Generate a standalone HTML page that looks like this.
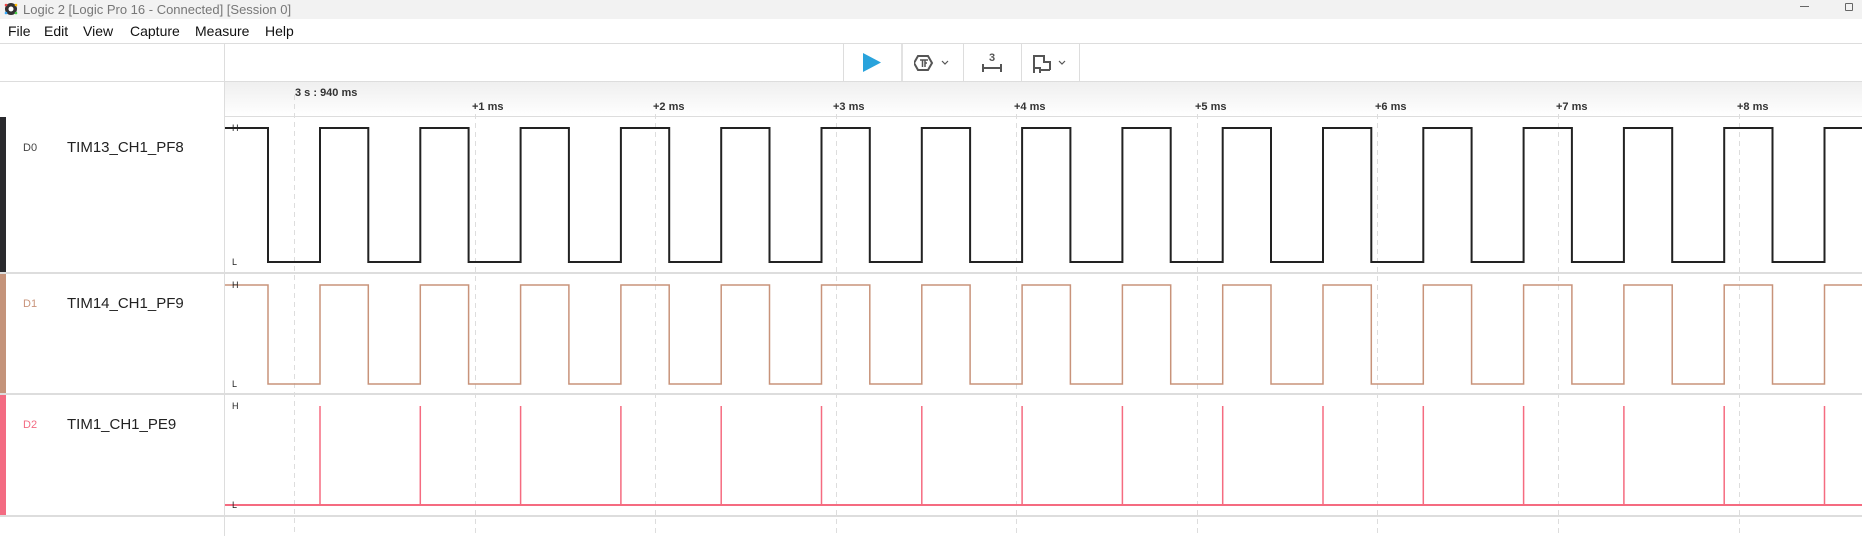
<!DOCTYPE html>
<html><head><meta charset="utf-8"><style>
*{margin:0;padding:0;box-sizing:border-box}
body{width:1862px;height:536px;overflow:hidden;background:#fff;font-family:"Liberation Sans",sans-serif;position:relative}
.abs{position:absolute}
.title{left:0;top:0;width:1862px;height:19px;background:#f2f2f2}
.title span{position:absolute;left:23px;top:2px;font-size:13px;color:#777}
.menu{top:19px;left:0;width:1862px;height:25px;border-bottom:1px solid #ddd}
.menu span{position:absolute;top:4px;font-size:14px;color:#111}
.tb{top:44px;left:0;width:1862px;height:38px;border-bottom:1px solid #ddd}
.ruler{top:82px;left:225px;width:1637px;height:35px;background:linear-gradient(#efefef,#fff);border-bottom:1px solid #ddd}
.rl{position:absolute;font-size:11px;font-weight:bold;color:#333}
.vl{position:absolute;width:1px;background:#ddd}
.lbl{position:absolute;font-size:11px}
.nm{position:absolute;font-size:15px;color:#222}
.hl{position:absolute;font-size:9px;color:#222}
</style></head><body>
<div class="abs title"><svg class="abs" style="left:4px;top:2px" width="14" height="14"><circle cx="7" cy="7" r="6" fill="#333"/><circle cx="7" cy="7" r="2.5" fill="#fff"/><circle cx="2" cy="3" r="1.3" fill="#e44"/><circle cx="12" cy="3" r="1.3" fill="#fb0"/><circle cx="2" cy="11" r="1.3" fill="#3af"/><circle cx="12" cy="11" r="1.3" fill="#4c4"/></svg><span>Logic 2 [Logic Pro 16 - Connected] [Session 0]</span>
<div class="abs" style="left:1800px;top:6px;width:9px;height:1px;background:#666"></div>
<div class="abs" style="left:1845px;top:3px;width:8px;height:8px;border:1px solid #666;border-radius:1px"></div></div>
<div class="abs menu"><span style="left:8px">File</span><span style="left:44px">Edit</span><span style="left:83px">View</span><span style="left:130px">Capture</span><span style="left:195px">Measure</span><span style="left:265px">Help</span></div>
<div class="abs tb">
<div class="vl" style="left:843px;top:0;height:37px"></div>
<div class="vl" style="left:901px;top:0;height:37px;width:2px;background:#e2e2e2"></div>
<div class="vl" style="left:963px;top:0;height:37px"></div>
<div class="vl" style="left:1021px;top:0;height:37px"></div>
<div class="vl" style="left:1079px;top:0;height:37px"></div>
<svg class="abs" style="left:863px;top:9px" width="20" height="20"><path d="M0 0 L18 9.5 L0 19Z" fill="#29a3dc"/></svg>
<svg class="abs" style="left:914px;top:8px" width="40" height="22" fill="none" stroke="#555" stroke-width="2"><path d="M4 4 H14 L18 11 L14 18 H4 L0 11Z"/><path d="M6 8 H11 M8.5 8 V15 M11 8 V15 M11 8 H14 M11 11 H13" stroke-width="1.5"/><path d="M28 9 L31 12 L34 9" stroke-width="1.2"/></svg>
<svg class="abs" style="left:981px;top:8px" width="24" height="24" fill="none" stroke="#555" stroke-width="2"><text x="8" y="9" font-size="11" font-weight="bold" fill="#555" stroke="none" font-family="Liberation Sans">3</text><path d="M2 12 V20 M20 12 V20 M2 16 H20"/></svg>
<svg class="abs" style="left:1031px;top:8px" width="40" height="24" fill="none" stroke="#555" stroke-width="2"><path d="M3 21 V4 H13 V10 H19 V18 M9 18 H19 M3 16 H9 V21"/><path d="M28 9 L31 12 L34 9" stroke-width="1.2"/></svg>
</div>
<div class="abs ruler">
<div class="rl" style="left:70px;top:5px">3 s : 940 ms</div>
<div class="rl" style="left:247px;top:19px">+1 ms</div>
<div class="rl" style="left:428px;top:19px">+2 ms</div>
<div class="rl" style="left:608px;top:19px">+3 ms</div>
<div class="rl" style="left:789px;top:19px">+4 ms</div>
<div class="rl" style="left:970px;top:19px">+5 ms</div>
<div class="rl" style="left:1150px;top:19px">+6 ms</div>
<div class="rl" style="left:1331px;top:19px">+7 ms</div>
<div class="rl" style="left:1512px;top:19px">+8 ms</div>
</div>
<div class="vl" style="left:224px;top:44px;height:492px"></div>
<svg class="abs" style="left:0;top:0" width="1862" height="536">
<g stroke="#ddd" stroke-dasharray="5,4" stroke-width="1">
<path d="M294.5 95V536M475.5 114V536M655.5 114V536M836.5 114V536M1016.5 114V536M1197.5 114V536M1377.5 114V536M1558.5 114V536M1739.5 114V536"/></g>
<g fill="#ddd"><rect x="0" y="272" width="1862" height="2"/><rect x="0" y="393" width="1862" height="2"/><rect x="0" y="515" width="1862" height="2"/></g>
<rect x="0" y="117" width="6" height="155" fill="#2a2a2e"/>
<rect x="0" y="274" width="6" height="119" fill="#c4937a"/>
<rect x="0" y="395" width="6" height="120" fill="#f36b82"/>
<path fill="none" stroke="#222" stroke-width="2" d="M225 128H268V262H320V128H368.3V262H420.3V128H468.6V262H520.6V128H568.9V262H620.9V128H669.2V262H721.2V128H769.5V262H821.5V128H869.8V262H921.8V128H970.1V262H1022.1V128H1070.4V262H1122.4V128H1170.7V262H1222.7V128H1271V262H1323V128H1371.3V262H1423.3V128H1471.6V262H1523.6V128H1571.9V262H1623.9V128H1672.2V262H1724.2V128H1772.5V262H1824.5V128H1862"/>
<path fill="none" stroke="#c8937a" stroke-width="1.5" d="M225 285H268V384H320V285H368.3V384H420.3V285H468.6V384H520.6V285H568.9V384H620.9V285H669.2V384H721.2V285H769.5V384H821.5V285H869.8V384H921.8V285H970.1V384H1022.1V285H1070.4V384H1122.4V285H1170.7V384H1222.7V285H1271V384H1323V285H1371.3V384H1423.3V285H1471.6V384H1523.6V285H1571.9V384H1623.9V285H1672.2V384H1724.2V285H1772.5V384H1824.5V285H1862"/>
<path fill="none" stroke="#f56b80" stroke-width="2" d="M225 505H1862"/>
<path fill="none" stroke="#f56b80" stroke-width="1.5" d="M320 406V505M420.3 406V505M520.6 406V505M620.9 406V505M721.2 406V505M821.5 406V505M921.8 406V505M1022.1 406V505M1122.4 406V505M1222.7 406V505M1323 406V505M1423.3 406V505M1523.6 406V505M1623.9 406V505M1724.2 406V505M1824.5 406V505"/>
</svg>
<div class="hl" style="left:232px;top:123px">H</div><div class="hl" style="left:232px;top:257px">L</div>
<div class="hl" style="left:232px;top:280px">H</div><div class="hl" style="left:232px;top:379px">L</div>
<div class="hl" style="left:232px;top:401px">H</div><div class="hl" style="left:232px;top:500px">L</div>
<div class="lbl" style="left:23px;top:142px;color:#444">D0</div><div class="nm" style="left:67px;top:139px">TIM13_CH1_PF8</div>
<div class="lbl" style="left:23px;top:298px;color:#c8937a">D1</div><div class="nm" style="left:67px;top:295px">TIM14_CH1_PF9</div>
<div class="lbl" style="left:23px;top:419px;color:#f36b82">D2</div><div class="nm" style="left:67px;top:416px">TIM1_CH1_PE9</div>
</body></html>
